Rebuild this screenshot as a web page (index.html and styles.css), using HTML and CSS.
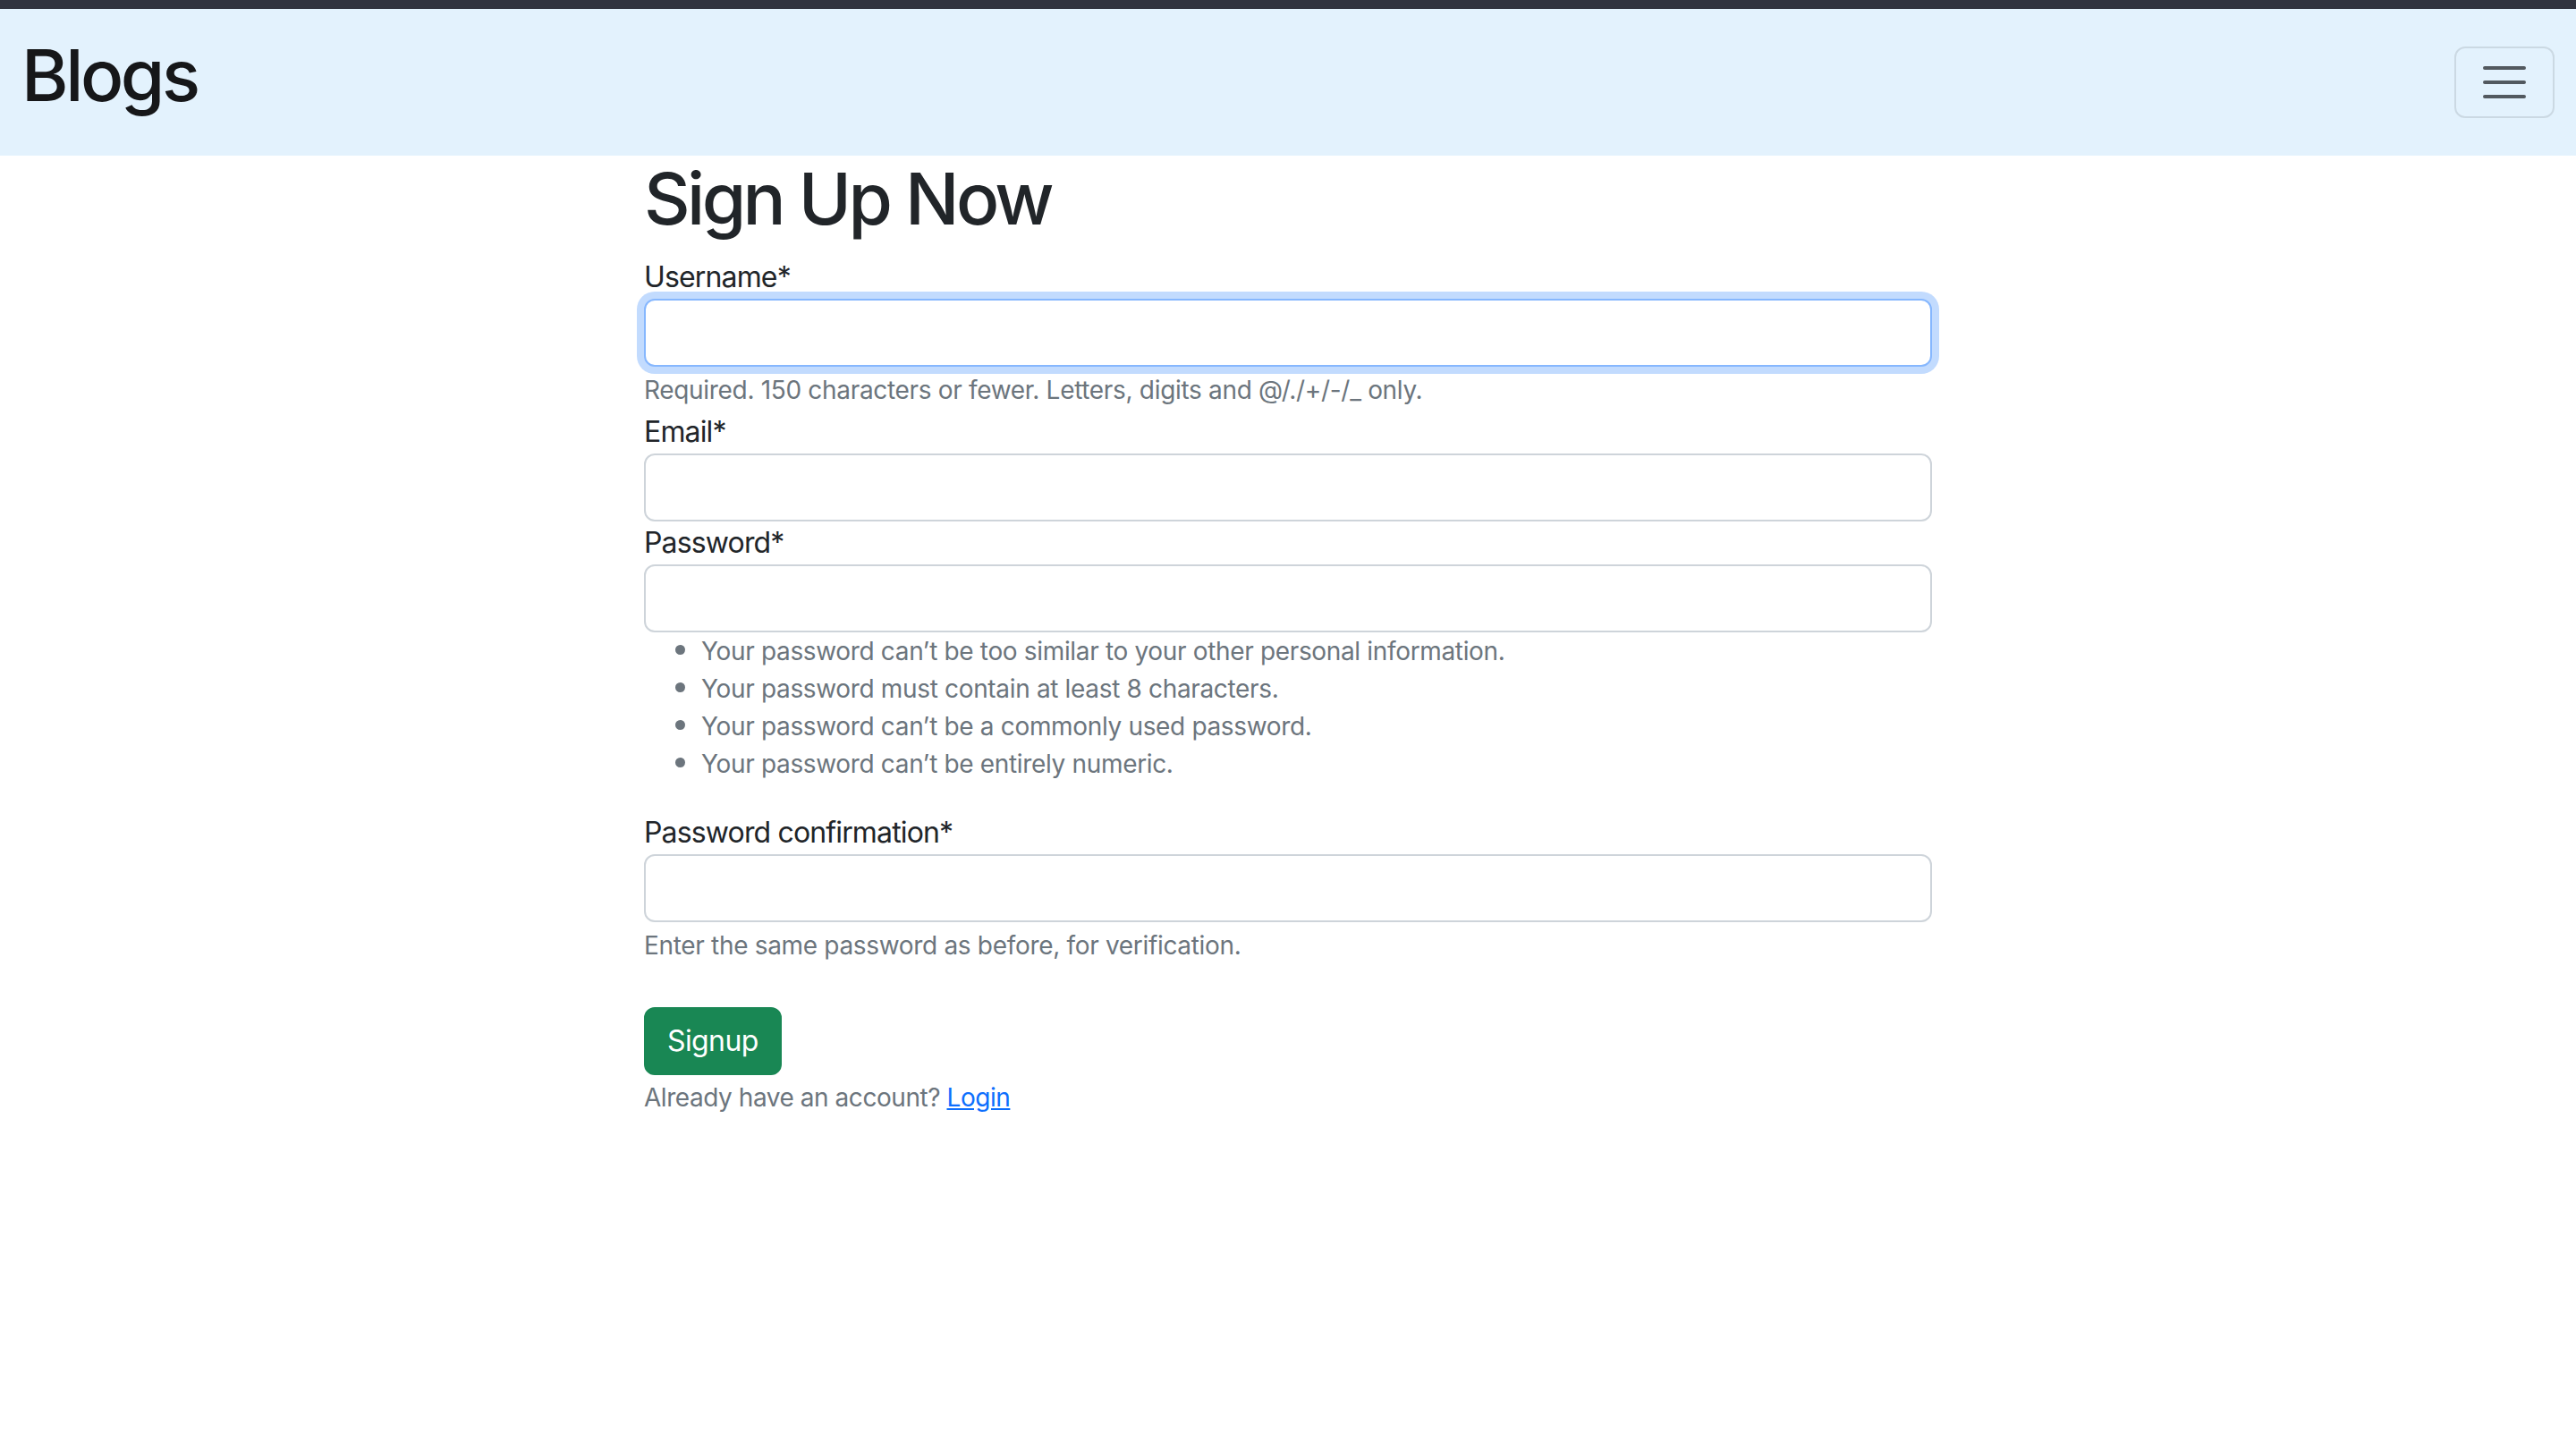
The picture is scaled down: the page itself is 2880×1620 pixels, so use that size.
FILE: index.html
```html
<!DOCTYPE html>
<html lang="en">
<head>
<meta charset="utf-8">
<title>Sign Up</title>
<link rel="stylesheet" href="styles.css">
</head>
<body>
<div class="topbar"></div>
<nav class="navbar">
  <div class="nav-inner">
    <a class="brand" href="#"><h1 class="brand-title">Blogs</h1></a>
    <button class="toggler" type="button" aria-label="Toggle navigation">
      <svg class="toggler-icon" viewBox="0 0 30 30" width="60" height="60" aria-hidden="true">
        <path d="M4 7h22M4 15h22M4 23h22" fill="none" stroke="rgba(33,37,41,0.75)" stroke-width="2" stroke-linecap="round" stroke-miterlimit="10"/>
      </svg>
    </button>
  </div>
</nav>
<main class="page">
  <h1 class="page-title">Sign Up Now</h1>
  <form class="signup-form">
    <label class="form-label" for="id_username">Username*</label>
    <input class="form-control is-focused" type="text" id="id_username">
    <div class="help">Required. 150 characters or fewer. Letters, digits and @/./+/-/_ only.</div>

    <label class="form-label" for="id_email">Email*</label>
    <input class="form-control" type="email" id="id_email">

    <label class="form-label" for="id_password1">Password*</label>
    <input class="form-control" type="password" id="id_password1">
    <ul class="pw-rules">
      <li>Your password can’t be too similar to your other personal information.</li>
      <li>Your password must contain at least 8 characters.</li>
      <li>Your password can’t be a commonly used password.</li>
      <li>Your password can’t be entirely numeric.</li>
    </ul>

    <label class="form-label" for="id_password2">Password confirmation*</label>
    <input class="form-control" type="password" id="id_password2">
    <div class="help">Enter the same password as before, for verification.</div>

    <button class="btn-success" type="button">Signup</button>
    <p class="account"><span class="muted">Already have an account? <a class="link" href="#">Login</a></span></p>
  </form>
</main>
</body>
</html>
```
FILE: styles.css
```css
* { box-sizing: border-box; }

html, body {
  margin: 0;
  padding: 0;
  background: #ffffff;
}

body {
  font-family: "Inter", "Roboto", "Liberation Sans", sans-serif;
  font-size: 32px;
  line-height: 48px;
  color: #212529;
}

.topbar {
  height: 10px;
  background: #31343f;
}

.navbar {
  background: #e3f2fd;
  padding: 16px 0;
}

.nav-inner {
  display: flex;
  align-items: center;
  justify-content: space-between;
  padding: 0 24px;
}

.brand {
  display: block;
  padding: 10px 0;
  color: #161719;
  text-decoration: none;
}

.brand-title {
  margin: 0 0 16px;
  font-size: 80px;
  line-height: 96px;
  font-weight: 500;
  letter-spacing: -3.4px;
}

.toggler {
  width: 112px;
  height: 80px;
  padding: 0;
  display: flex;
  align-items: center;
  justify-content: center;
  background: transparent;
  border: 2px solid rgba(0, 0, 0, 0.1);
  border-radius: 12px;
}

.toggler-icon { display: block; }

.page {
  width: 1440px;
  margin: 0 auto;
}

.page-title {
  margin: 0 0 16px;
  font-size: 80px;
  line-height: 96px;
  font-weight: 500;
  letter-spacing: -3.6px;
  color: #212529;
}

.signup-form { display: block; }

.form-label {
  display: block;
  font-size: 32px;
  line-height: 48px;
  letter-spacing: -0.85px;
  color: #212529;
}

.form-control {
  display: block;
  width: 100%;
  height: 76px;
  padding: 12px 24px;
  font: inherit;
  color: #212529;
  background: #ffffff;
  border: 2px solid #ced4da;
  border-radius: 12px;
  outline: none;
}

.form-control.is-focused {
  border-color: #86b7fe;
  box-shadow: 0 0 0 8px rgba(13, 110, 253, 0.25);
}

.help {
  padding-top: 3px;
  font-size: 28px;
  line-height: 46px;
  letter-spacing: -0.32px;
  color: #6c757d;
}

.pw-rules {
  margin: -2px 0 34px;
  padding-left: 64px;
  font-size: 28px;
  line-height: 42px;
  letter-spacing: -0.34px;
  color: #6c757d;
}

.pw-rules li {
  height: 42px;
}

.pw-rules li::marker {
  font-size: 34px;
}

.btn-success {
  display: inline-block;
  margin-top: 46px;
  height: 76px;
  padding: 0 24px;
  font: inherit;
  font-size: 32px;
  line-height: 72px;
  letter-spacing: -0.6px;
  color: #ffffff;
  background: #198754;
  border: 2px solid #198754;
  border-radius: 12px;
}

.account {
  margin: 0;
  font-size: 32px;
  line-height: 48px;
}

.muted {
  font-size: 28px;
  letter-spacing: -0.45px;
  color: #6c757d;
}

.link {
  color: #0d6efd;
  text-decoration: underline;
}
```
